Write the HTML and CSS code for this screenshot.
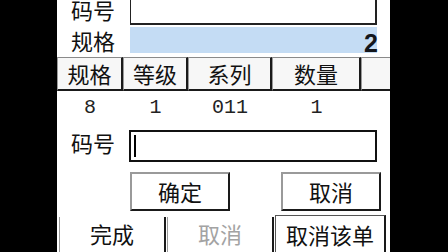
FILE: index.html
```html
<!DOCTYPE html>
<html>
<head>
<meta charset="utf-8">
<link rel="stylesheet" href="styles.css">
</head>
<body>
<div class="screen">
  <div class="row row-top">
    <div class="label">码号</div>
    <div class="box box-top"></div>
  </div>
  <div class="row row-spec">
    <div class="label">规格</div>
    <div class="band"><span class="count">2</span></div>
  </div>
  <div class="grid head">
    <div class="cell c1">规格</div>
    <div class="cell c2">等级</div>
    <div class="cell c3">系列</div>
    <div class="cell c4">数量</div>
    <div class="cell c5"></div>
  </div>
  <div class="grid data">
    <div class="dcell c1">8</div>
    <div class="dcell c2">1</div>
    <div class="dcell c3">011</div>
    <div class="dcell c4">1</div>
  </div>
  <div class="row row-code">
    <div class="label label-code">码号</div>
    <div class="box box-code"><span class="caret"></span></div>
  </div>
  <div class="buttons">
    <div class="btn">确定</div>
    <div class="btn">取消</div>
  </div>
  <div class="tabs">
    <div class="tab">完成</div>
    <div class="tab disabled">取消</div>
    <div class="tab active">取消该单</div>
  </div>
</div>
</body>
</html>
```
FILE: styles.css
```css
html, body {
  margin: 0;
  padding: 0;
  background: #000;
  width: 448px;
  height: 252px;
  overflow: hidden;
}
.screen {
  margin-left: 57px;
  width: 333px;
  height: 252px;
  background: #fff;
  overflow: hidden;
  display: flex;
  flex-direction: column;
  font-family: "Noto Sans CJK SC", sans-serif;
  font-size: 22px;
  color: #111;
}
.row {
  display: flex;
  flex-shrink: 0;
}
.label {
  width: 59px;
  padding-left: 14px;
  line-height: 22px;
  flex-shrink: 0;
}
.row-top {
  margin-top: -8px;
  height: 34px;
  align-items: center;
}
.box-top {
  box-sizing: border-box;
  width: 247px;
  height: 33px;
  border: 2px solid #222;
  border-left-width: 1px;
  align-self: flex-start;
}
.row-spec {
  height: 28px;
  align-items: center;
  margin-bottom: 3px;
}
.band {
  width: 247px;
  height: 26px;
  background: #c4dcf4;
  display: flex;
  justify-content: flex-end;
  align-items: flex-end;
}
.count {
  font-family: "Liberation Sans", sans-serif;
  font-weight: bold;
  font-size: 25px;
  line-height: 20px;
  color: #14171c;
  margin-right: -1px;
}
.grid {
  display: flex;
  flex-shrink: 0;
  height: 34px;
}
.c1 { width: 66px; }
.c2 { width: 65px; }
.c3 { width: 84px; }
.c4 { width: 89px; }
.c5 { width: 40px; }
.cell {
  box-sizing: border-box;
  flex-shrink: 0;
  height: 34px;
  background: #f7f7f7;
  border-top: 1px solid #8a8a8a;
  border-left: 1px solid #9a9a9a;
  border-right: 2px solid #1a1a1a;
  border-bottom: 2px solid #1a1a1a;
  text-align: center;
  line-height: 30px;
}
.dcell {
  flex-shrink: 0;
  text-align: center;
  font-family: "Liberation Mono", monospace;
  font-size: 20px;
  line-height: 34px;
  color: #222;
}
.row-code {
  margin-top: 5px;
  height: 32px;
}
.label-code {
  margin-top: 1px;
}
.box-code {
  box-sizing: border-box;
  width: 248px;
  height: 32px;
  margin-left: -1px;
  border: 2px solid #111;
  display: flex;
  align-items: center;
}
.caret {
  width: 2px;
  height: 22px;
  margin-left: 3px;
  background: #000;
}
.buttons {
  display: flex;
  flex-shrink: 0;
  margin-top: 10px;
  padding-left: 73px;
  gap: 51px;
}
.btn {
  box-sizing: border-box;
  width: 100px;
  height: 39px;
  background: #fff;
  border-top: 2px solid #9a9a9a;
  border-left: 2px solid #9a9a9a;
  border-right: 2px solid #1a1a1a;
  border-bottom: 2px solid #1a1a1a;
  text-align: center;
  line-height: 35px;
}
.tabs {
  display: flex;
  flex-shrink: 0;
  margin-top: 4px;
  padding-left: 2px;
  gap: 1px;
  height: 37px;
}
.tab {
  box-sizing: border-box;
  width: 107px;
  margin-top: 2px;
  padding-top: 5px;
  line-height: 22px;
  text-align: center;
  border-left: 1px solid #9a9a9a;
  border-right: 2px solid #1a1a1a;
}
.tab.disabled {
  color: #a3a3a3;
}
.tab.active {
  width: 111px;
  margin-top: 0;
  padding-top: 7px;
  border-top: 1px solid #555;
  border-left: 1px solid #555;
}
```
